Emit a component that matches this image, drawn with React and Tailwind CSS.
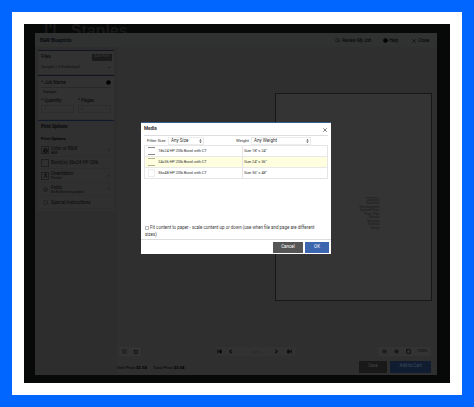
import {
  Search, X, ZoomIn, ZoomOut, CircleHelp, Info, ChevronRight, ChevronDown,
  User, Layers, Circle, LayoutGrid, Square, SkipBack, ChevronLeft, SkipForward, Printer
} from 'lucide-react'

const MEDIA = [
  { name: '18x24 HP 20lb Bond with CT', size: 'Size 18" x 24"', lines: 'border-t border-b border-[#888]' },
  { name: '24x36 HP 20lb Bond with CT', size: 'Size 24" x 36"', lines: 'border-t border-b border-[#b5b29a]', selected: true },
  { name: '36x48 HP 20lb Bond with CT', size: 'Size 36" x 48"', lines: 'border border-[#eee]' },
]

const OPTIONS = [
  { icon: Printer, label: 'Color or B&W', value: 'B&W', height: 'h-[13px]', arrow: true, box: true },
  { icon: null, label: 'Bond(w) 36x24 HP 20lb', height: 'h-[12px]', box: true },
  { icon: User, label: 'Orientation', value: 'Portrait', height: 'h-[14px]', arrow: true, box: true },
  { icon: Layers, label: 'Folds', value: 'No Folds on my project', height: 'h-[13px]', arrow: true },
  { icon: Circle, label: 'Special Instructions', height: 'h-[13px]' },
]

const PREVIEW_LINES = ['Address', 'Facilities', 'Development', 'Second Floor', 'Floor Plan', 'Details', 'Drawing', 'Section', 'Sheet']

function TopBar() {
  return (
    <header className="flex h-[14px] shrink-0 items-center justify-between bg-[#303232] pl-[5px] pr-[8px] pt-[2px] text-[4.6px] text-[#030303]">
      <span className="text-[4.6px] font-bold tracking-[-0.05px] text-[#080c10]">B&amp;W Blueprints</span>
      <div className="flex items-center whitespace-nowrap tracking-[-0.13px]">
        <span className="mr-[12px] flex items-center gap-[2px]"><Search size={5} />Review My Job</span>
        <span className="mr-[13px] flex items-center gap-[1px]"><CircleHelp size={5} fill="#050505" />Help</span>
        <span className="flex items-center gap-[1px]"><X size={6} />Close</span>
      </div>
    </header>
  )
}

function Sidebar() {
  return (
    <aside className="flex w-[82px] shrink-0 flex-col gap-[1px] bg-[#2d2d2d] pl-[3px] pr-[3px] pt-[3px] text-[#060606]">
      <section className="h-[24px] border-t border-[#10151f] bg-[#323232] pl-[3px] pr-[2px]">
        <div className="flex h-[10px] items-center justify-between pt-[2px] text-[4.8px]">
          <span>Files</span>
          <span className="flex h-[7px] w-[20px] items-center justify-center bg-[#1b1b1b] text-[3.6px] text-[#3a3a3a]">Add Files</span>
        </div>
        <div className="flex h-[12px] items-center justify-between pr-[1px] text-[3.9px]">
          <span className="text-[#0e0e0e]">Sample 1.0 Folded.pdf</span>
          <ChevronDown size={3} strokeWidth={4} />
        </div>
      </section>

      <section className="h-[44px] border-t border-[#10151f] bg-[#323232] px-[3px] text-[4.7px]">
        <div className="flex h-[11px] items-center justify-between pt-[2px]">
          <span>* Job Name</span>
          <Info size={5} fill="#030303" />
        </div>
        <div className="h-[7px] border-t border-[#292929] pl-[2px] text-[4px] leading-[7px]">Sample</div>
        <div className="mt-[3px] grid grid-cols-2 gap-[4px] leading-[8px]">
          <div>
            <span>* Quantity</span>
            <div className="h-[8px] border border-[#2c2c2c] pl-[2px] text-[4px] leading-[6px] text-[#1c1c1c]">1</div>
          </div>
          <div>
            <span>* Pages</span>
            <div className="h-[8px] border border-[#2c2c2c] pl-[2px] text-[4px] leading-[6px] text-[#1c1c1c]">6</div>
          </div>
        </div>
      </section>

      <section className="h-[91px] border-t border-[#10182b] bg-[#303030] px-[3px]">
        <h2 className="h-[12px] text-[4.5px] font-bold leading-[12px]">Print Options</h2>
        <h3 className="h-[11px] text-[4.2px] font-bold leading-[12px]">Print Options</h3>
        {OPTIONS.map(({ icon: Icon, label, value, height, arrow, box }) => (
          <div key={label} className={`flex items-center border-b border-[#2d2d2d] ${height}`}>
            <span className={`flex h-[8px] w-[8px] shrink-0 items-center justify-center ${box ? 'border border-[#1f1f1f]' : ''}`}>
              {Icon && <Icon size={5} strokeWidth={2.5} className={box ? 'text-black' : 'text-[#1a1a1a]'} />}
            </span>
            <span className="ml-[2px] flex-1 whitespace-nowrap text-[4.5px] leading-[5px] text-[#0a0a0a]">
              {label}
              {value && <small className="block text-[3.2px] leading-[4px]">{value}</small>}
            </span>
            {arrow && <ChevronRight size={4} strokeWidth={3} className="shrink-0 text-[#121212]" />}
          </div>
        ))}
      </section>
    </aside>
  )
}

function Workspace() {
  return (
    <main className="flex flex-1 flex-col bg-[#2f2f2f]">
      <div className="ml-[158px] mt-[46px] flex h-[208px] w-[157px] justify-center border border-[#171717] bg-[#343434]">
        <div className="ml-[32px] mt-[103px] flex h-[35px] flex-col items-end text-[3.4px] leading-[3.45px] text-[#1a1a1a]">
          <span className="mb-[1px] h-[1px] w-[14px] border-t border-[#292929]" />
          {PREVIEW_LINES.map(line => <span key={line}>{line}</span>)}
        </div>
      </div>

      <div className="mt-[46px] flex h-[9px] items-center text-[#0c0c0c]">
        <div className="ml-[2px] flex h-[9px] w-[22px] items-center justify-around bg-[#333]">
          <LayoutGrid size={5} className="text-[#1c1c1c]" />
          <Square size={4} strokeWidth={5} />
        </div>
        <div className="ml-[75px] flex h-[9px] w-[80px] items-center bg-[#323232] text-[4px]">
          <SkipBack size={5} strokeWidth={4} fill="currentColor" className="ml-[1px]" />
          <ChevronLeft size={5} strokeWidth={6} className="ml-[6px]" />
          <span className="ml-[6px] w-[33px] text-center text-[#222]">1 of 6</span>
          <ChevronRight size={5} strokeWidth={6} className="ml-[2px]" />
          <SkipForward size={5} strokeWidth={4} fill="currentColor" className="ml-[8px]" />
        </div>
        <div className="ml-[82px] flex h-[9px] w-[53px] items-center justify-between bg-[#333] px-[4px] text-[4.2px] tracking-[-0.1px]">
          <ZoomOut size={5} strokeWidth={3} />
          <ZoomIn size={5} strokeWidth={3} />
          <Square size={5} strokeWidth={4} />
          <span>100%</span>
        </div>
      </div>

      <footer className="mt-[4px] flex h-[13px] items-center text-[4.3px] tracking-[-0.05px] text-[#020202]">
        <span className="mt-[3px] whitespace-nowrap">Unit Price <b>$3.58</b></span>
        <span className="ml-[6px] mt-[3px] whitespace-nowrap">Total Price <b>$3.58</b></span>
        <button className="ml-auto h-[12px] w-[28px] bg-[#191919] text-[4.5px] text-[#444]">Save</button>
        <button className="ml-[3px] mr-[6px] h-[12px] w-[41px] bg-[#101d31] text-[4.5px] text-[#3f4d60]">Add to Cart</button>
      </footer>
    </main>
  )
}

function FilterSelect({ value, className }) {
  return (
    <span className={`flex h-[8px] items-center justify-between border border-[#ececec] pl-[2px] pr-[1px] text-[4.6px] text-[#333] ${className}`}>
      {value}
      <svg viewBox="0 0 3 5" className="h-[4px] w-[3px]" fill="#444">
        <path d="M0 2 1.5 0 3 2ZM0 3h3L1.5 5Z" />
      </svg>
    </span>
  )
}

function MediaDialog() {
  return (
    <div role="dialog" className="flex h-[132px] w-[190px] flex-col border-t border-[#3c5f92] bg-white text-[#3a3a3a]">
      <div className="mx-[3px] flex h-[13px] shrink-0 items-center justify-between border-b border-[#ddd] pt-[1px]">
        <h1 className="text-[4.6px] font-bold text-[#333]">Media</h1>
        <X size={6} strokeWidth={2.5} />
      </div>
      <div className="flex h-[9px] shrink-0 items-center pl-[6px] pt-[1px] text-[4.4px]">
        <span className="w-[21px] whitespace-nowrap tracking-[-0.05px]">Filter Size</span>
        <FilterSelect value="Any Size" className="w-[36px]" />
        <span className="ml-[32px] w-[15px] text-[4.3px] tracking-[-0.05px]">Weight</span>
        <FilterSelect value="Any Weight" className="w-[60px]" />
      </div>
      <div className="mx-[3px] border border-[#e5e5e5] text-[4.1px] tracking-[-0.13px]">
        {MEDIA.map(({ name, size, lines, selected }) => (
          <div key={name} className={`flex h-[11px] items-center border-b border-[#e8e8e8] last:h-[10px] last:border-b-0 ${selected ? 'bg-[#ffffdf]' : ''}`}>
            <span className={`ml-[3px] h-[8px] w-[7px] ${lines}`} />
            <span className="ml-[3px] w-[84px] whitespace-nowrap">{name}</span>
            <span className="flex h-full items-center whitespace-nowrap border-l border-[#e5e5e5] pl-[1px]">{size}</span>
          </div>
        ))}
      </div>
      <label className="mt-auto mx-[4px] flex h-[14px] shrink-0 items-start whitespace-nowrap text-[4.45px] leading-[6.5px]">
        <span className="mr-[1px] mt-[1px] h-[4px] w-[4px] shrink-0 border border-[#bbb]" />
        <span>
          Fit content to paper - scale content up or down (use when file and page are different
          <br /><span className="-ml-[5px]">sizes)</span>
        </span>
      </label>
      <div className="flex h-[15px] shrink-0 items-center justify-end gap-[2px] border-t border-[#ddd] pr-[2px] text-[4.5px] text-white">
        <button className="h-[11px] w-[30px] bg-[#555]">Cancel</button>
        <button className="h-[11px] w-[24px] bg-[#3c66ad]">OK</button>
      </div>
    </div>
  )
}

export default function App() {
  return (
    <div className="flex h-[407px] w-[474px] border-[12px] border-[#0066ff] bg-white p-[12px] font-['Roboto',sans-serif]">
      <div className="relative flex h-[359px] w-[426px] flex-col overflow-hidden bg-[#070808]">
        <div className="flex h-[9px] shrink-0 gap-[14px] pl-[20px] pt-[2px] font-['Liberation_Sans',sans-serif] text-[16px] font-bold leading-[9px] text-[#171717]">
          <span>I'I</span>
          <span>Staples</span>
        </div>
        <div className="relative ml-[11px] flex h-[342px] w-[402px] flex-col overflow-hidden">
          <TopBar />
          <div className="flex flex-1 bg-[#2f2f2f]">
            <Sidebar />
            <Workspace />
          </div>
        </div>
        <div className="absolute left-[117px] top-[98px]">
          <MediaDialog />
        </div>
      </div>
    </div>
  )
}
